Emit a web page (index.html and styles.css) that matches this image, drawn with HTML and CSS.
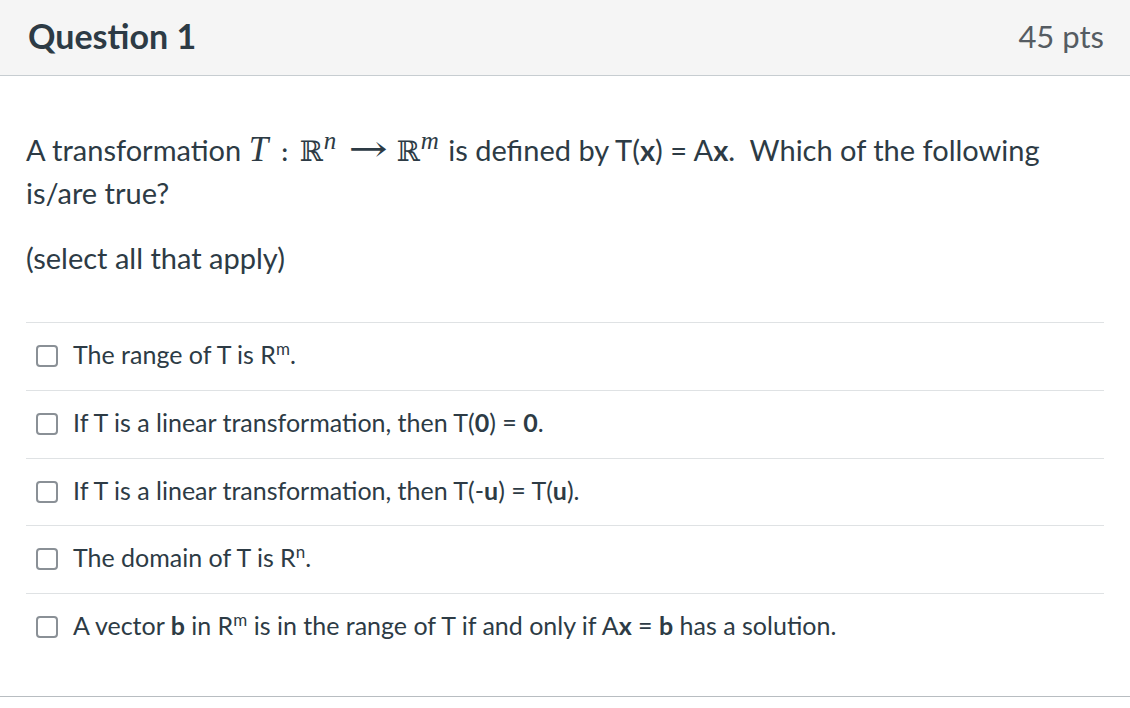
FILE: index.html
```html
<!DOCTYPE html>
<html>
<head>
<meta charset="utf-8">
<link rel="stylesheet" href="styles.css">
</head>
<body>
<div class="question">
  <div class="header">
    <div class="title">Question 1</div>
    <div class="pts">45 pts</div>
  </div>
  <div class="content">
    <p class="text">A transformation <span class="math"><i class="mt">T</i><span class="colon">:</span><span class="bb">ℝ</span><sup><i>n</i></sup><span class="arrow">→</span><span class="bb">ℝ</span><sup><i>m</i></sup></span> is defined by T(<b>x</b>) = A<b>x</b>.&nbsp; Which of the following is/are true?</p>
    <p class="text sel">(select all that apply)</p>
    <div class="answers">
      <div class="answer"><span class="box"></span><span>The range of T is R<sup>m</sup>.</span></div>
      <div class="answer"><span class="box"></span><span>If T is a linear transformation, then T(<b>0</b>) = <b>0</b>.</span></div>
      <div class="answer short"><span class="box"></span><span>If T is a linear transformation, then T(-<b>u</b>) = T(<b>u</b>).</span></div>
      <div class="answer"><span class="box"></span><span>The domain of T is R<sup>n</sup>.</span></div>
      <div class="answer"><span class="box"></span><span>A vector <b>b</b> in R<sup>m</sup> is in the range of T if and only if A<b>x</b> = <b>b</b> has a solution.</span></div>
    </div>
  </div>
</div>
</body>
</html>
```
FILE: styles.css
```css
html, body {
  margin: 0;
  padding: 0;
  background: #fff;
}
body {
  font-family: Lato, "Open Sans", sans-serif;
  color: #2d3b45;
}
.question {
  border-bottom: 1px solid #b8bdc1;
  height: 697px;
  box-sizing: border-box;
}
.header {
  height: 76px;
  box-sizing: border-box;
  background: #f5f5f5;
  border-bottom: 1px solid #c7cdd1;
  display: flex;
  justify-content: space-between;
  align-items: center;
  padding: 0 26px 4px 28px;
}
.title {
  font-size: 34px;
  font-weight: 700;
  color: #2d3b45;
}
.pts {
  font-size: 31px;
  color: #555c62;
}
.content {
  padding: 0 26px 0 26px;
}
.text {
  font-size: 29px;
  line-height: 43px;
  margin: 0;
}
.content > .text:first-child {
  padding-top: 52px;
}
.sel {
  margin-top: 22px;
}
.math {
  font-family: "DejaVu Serif", "Liberation Serif", serif;
  line-height: 0;
}
.math i {
  font-family: "Liberation Serif", serif;
}
.mt {
  font-size: 35px;
}
.bb {
  font-size: 28px;
}
.colon {
  font-size: 28px;
  margin: 0 10px 0 12px;
}
.math sup {
  line-height: 0;
  vertical-align: 12px;
  margin-left: 1px;
}
.math sup i {
  font-size: 25px;
  letter-spacing: 2px;
}
.arrow {
  display: inline-block;
  font-size: 36px;
  margin: 0 13px 0 15px;
  transform: scaleX(1.3);
}
.answers {
  margin-top: 43px;
}
.answer {
  border-top: 1px solid #dfe2e4;
  height: 68px;
  box-sizing: border-box;
  display: flex;
  align-items: center;
  gap: 15px;
  padding: 0 0 5px 10px;
  font-size: 25px;
}
.answer.short { height: 67px; }
.answer sup {
  font-size: 17px;
  line-height: 0;
  vertical-align: 9px;
}
.box {
  width: 18px;
  height: 18px;
  border: 2px solid #8a9096;
  border-radius: 4px;
  flex: none;
  background: #fff;
  margin-top: 4px;
}
```
